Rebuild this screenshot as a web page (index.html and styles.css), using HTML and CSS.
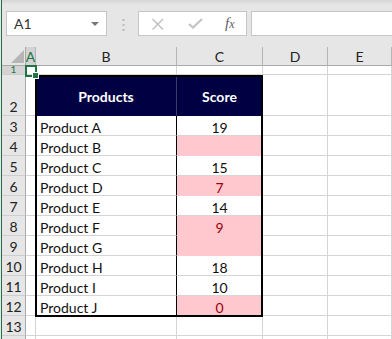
FILE: index.html
```html
<!DOCTYPE html>
<html lang="en">
  <head>
    <meta charset="UTF-8" />
    <title>Products - Excel</title>
    <link rel="stylesheet" href="styles.css">
  </head>
  <body>
    <div class="window">
      <div class="toolbar">
        <div class="name-box">
          <span>A1</span>
          <span class="drop"></span>
        </div>
        <svg class="grip" width="3" height="12" viewBox="0 0 3 12">
          <rect x="0.5" y="0" width="2" height="2" fill="#b9b9b9" />
          <rect x="0.5" y="5" width="2" height="2" fill="#b9b9b9" />
          <rect x="0.5" y="10" width="2" height="2" fill="#b9b9b9" />
        </svg>
        <div class="fx-box">
          <svg class="fx-icon" width="14" height="12" viewBox="0 0 14 12">
            <path d="M1.5 1 L12 11.5 M12 1 L1.5 11.5" stroke="#bdbdbd" stroke-width="1.4" fill="none" />
          </svg>
          <svg class="fx-icon" width="15" height="11" viewBox="0 0 15 11">
            <path d="M1 6 L5 9.5 L14 1" stroke="#c4c4c4" stroke-width="2.2" fill="none" />
          </svg>
          <span class="fx"><i>f</i><small>x</small></span>
        </div>
        <div class="formula"></div>
      </div>

      <div class="sheet">
        <!-- column headers -->
        <div class="corner"><span class="tri"></span></div>
        <div class="colhead sel">A</div>
        <div class="colhead">B</div>
        <div class="colhead">C</div>
        <div class="colhead">D</div>
        <div class="colhead">E</div>

        <!-- row 1 -->
        <div class="rowhead sel short">1</div>
        <div class="cell"></div>
        <div class="cell"></div>
        <div class="cell"></div>
        <div class="cell"></div>
        <div class="cell"></div>

        <!-- row 2 : table header -->
        <div class="rowhead">2</div>
        <div class="cell"></div>
        <div class="cell hdr split">Products</div>
        <div class="cell hdr">Score</div>
        <div class="cell"></div>
        <div class="cell"></div>

        <div class="rowhead">3</div>
        <div class="cell"></div>
        <div class="cell name">Product A</div>
        <div class="cell score">19</div>
        <div class="cell"></div>
        <div class="cell"></div>

        <div class="rowhead">4</div>
        <div class="cell"></div>
        <div class="cell name">Product B</div>
        <div class="cell score bad"></div>
        <div class="cell"></div>
        <div class="cell"></div>

        <div class="rowhead">5</div>
        <div class="cell"></div>
        <div class="cell name">Product C</div>
        <div class="cell score">15</div>
        <div class="cell"></div>
        <div class="cell"></div>

        <div class="rowhead">6</div>
        <div class="cell"></div>
        <div class="cell name">Product D</div>
        <div class="cell score bad">7</div>
        <div class="cell"></div>
        <div class="cell"></div>

        <div class="rowhead">7</div>
        <div class="cell"></div>
        <div class="cell name">Product E</div>
        <div class="cell score">14</div>
        <div class="cell"></div>
        <div class="cell"></div>

        <div class="rowhead">8</div>
        <div class="cell"></div>
        <div class="cell name">Product F</div>
        <div class="cell score bad">9</div>
        <div class="cell"></div>
        <div class="cell"></div>

        <div class="rowhead">9</div>
        <div class="cell"></div>
        <div class="cell name">Product G</div>
        <div class="cell score bad"></div>
        <div class="cell"></div>
        <div class="cell"></div>

        <div class="rowhead">10</div>
        <div class="cell"></div>
        <div class="cell name">Product H</div>
        <div class="cell score">18</div>
        <div class="cell"></div>
        <div class="cell"></div>

        <div class="rowhead">11</div>
        <div class="cell"></div>
        <div class="cell name">Product I</div>
        <div class="cell score">10</div>
        <div class="cell"></div>
        <div class="cell"></div>

        <div class="rowhead">12</div>
        <div class="cell"></div>
        <div class="cell name">Product J</div>
        <div class="cell score bad">0</div>
        <div class="cell"></div>
        <div class="cell"></div>

        <div class="rowhead">13</div>
        <div class="cell"></div>
        <div class="cell"></div>
        <div class="cell"></div>
        <div class="cell"></div>
        <div class="cell"></div>

        <div class="rowhead">14</div>
        <div class="cell"></div>
        <div class="cell"></div>
        <div class="cell"></div>
        <div class="cell"></div>
        <div class="cell"></div>

        <!-- thick outline around B2:C12 -->
        <div class="outline"></div>
        <!-- active cell A1 -->
        <div class="active"><span class="handle"></span></div>
      </div>
    </div>
  </body>
</html>
```

FILE: styles.css
```css
html,
body {
  margin: 0;
  height: 100%;
  overflow: hidden;
}
body {
  background: #e6e6e6;
  font-family: Lato, "Open Sans", sans-serif;
  font-size: 14px;
  color: #1e1e1e;
}
.window {
  margin-left: 1px;
  border-left: 1px solid #217346;
  height: 100%;
}

/* formula bar */
.toolbar {
  height: 47px;
  box-sizing: border-box;
  padding-top: 11px;
  display: flex;
  align-items: flex-start;
  background: linear-gradient(#d6d6d6, #e6e6e6 5px);
}
.name-box {
  margin-left: 4px;
  width: 101px;
  height: 25px;
  box-sizing: border-box;
  background: #fff;
  border: 1px solid #c6c6c6;
  display: flex;
  align-items: center;
  justify-content: space-between;
  padding: 0 7px 0 7px;
  color: #333;
  font-size: 14px;
}
.drop {
  width: 0;
  height: 0;
  border-left: 4px solid transparent;
  border-right: 4px solid transparent;
  border-top: 4px solid #777;
}
.grip {
  margin: 8px 0 0 15px;
}
.fx-box {
  margin-left: 13px;
  width: 109px;
  height: 25px;
  box-sizing: border-box;
  background: #fff;
  border: 1px solid #c6c6c6;
  display: flex;
  align-items: center;
  padding-left: 12px;
  gap: 23px;
}
.fx {
  font-family: "Liberation Serif", serif;
  color: #5e5e5e;
  font-size: 15px;
  margin-left: -1px;
}
.fx small {
  font-size: 12px;
  font-style: italic;
}
.formula {
  flex: 1;
  margin-left: 4px;
  margin-right: -2px;
  height: 25px;
  box-sizing: border-box;
  background: #fff;
  border: 1px solid #c6c6c6;
}

/* grid */
.sheet {
  position: relative;
  display: grid;
  grid-template-columns: 24px 10px 141px 86px 65px 64px;
  grid-template-rows: 19px 9px 41px repeat(12, 20px);
  background: #fff;
}
.sheet > div {
  box-sizing: border-box;
}
.corner,
.colhead {
  background: #e6e6e6;
  border-bottom: 1px solid #a9a9a9;
}
.corner {
  border-right: 1px solid #a9a9a9;
  position: relative;
}
.tri {
  position: absolute;
  right: 1px;
  bottom: 2px;
  width: 0;
  height: 0;
  border-left: 13px solid transparent;
  border-bottom: 13px solid #b6b6b6;
}
.colhead {
  border-right: 1px solid #b4b4b4;
  display: flex;
  align-items: center;
  justify-content: center;
  padding-top: 1px;
  color: #222;
}
.colhead.sel,
.rowhead.sel {
  background: #d3d3d3;
  color: #217346;
}
.rowhead {
  background: #e6e6e6;
  border-right: 1px solid #a9a9a9;
  border-bottom: 1px solid #cdcdcd;
  display: flex;
  align-items: flex-end;
  justify-content: center;
  padding-bottom: 1px;
  line-height: 14px;
  color: #222;
  overflow: hidden;
}
.rowhead.short {
  padding-bottom: 0;
  line-height: 10px;
  font-size: 10px;
}
.cell {
  border-right: 1px solid #d4d4d4;
  border-bottom: 1px solid #d4d4d4;
  display: flex;
  align-items: flex-end;
  line-height: 14px;
  white-space: nowrap;
}
.hdr {
  background: #000042;
  border-color: #000042;
  color: #fff;
  font-weight: bold;
  justify-content: center;
  align-items: center;
  padding-top: 3px;
}
.hdr.split {
  border-right-color: #3a3a68;
}
.name {
  border-right-color: #000;
  padding-left: 4px;
  color: #111;
}
.score {
  justify-content: center;
  color: #111;
}
.bad {
  background: #ffc7ce;
  border-bottom-color: #ffc7ce;
  color: #9c0006;
}

/* overlays take their box from the grid lines */
.outline {
  position: absolute;
  grid-column: 3 / 5;
  grid-row: 3 / 14;
  top: 0;
  left: -1px;
  right: 0;
  bottom: -1px;
  border: 2px solid #000;
  pointer-events: none;
}
.active {
  position: absolute;
  grid-column: 2 / 3;
  grid-row: 2 / 3;
  top: -1px;
  left: -1px;
  right: -1px;
  bottom: -2px;
  border: 2px solid #217346;
}
.handle {
  position: absolute;
  right: -4px;
  bottom: -4px;
  width: 5px;
  height: 5px;
  background: #217346;
  border: 1px solid #fff;
}
```
